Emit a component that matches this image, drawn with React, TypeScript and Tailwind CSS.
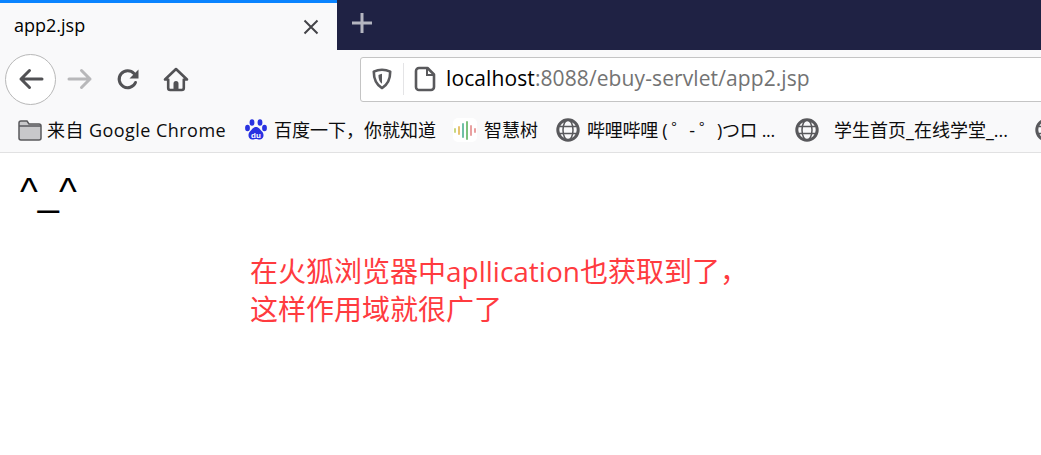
import React from "react";

const F = { fontFamily: '"Open Sans","Noto Sans CJK SC",sans-serif' };

function Globe({ className = "" }: { className?: string }) {
  return (
    <svg width="24" height="24" viewBox="0 0 24 24" fill="none" stroke="#59595c" className={className}>
      <circle cx="12" cy="12" r="10.2" strokeWidth="3" />
      <ellipse cx="12" cy="12" rx="5" ry="10" strokeWidth="1.5" />
      <path d="M3 8.5h18M3 15.5h18" strokeWidth="1.5" />
    </svg>
  );
}

function Shield() {
  return (
    <svg width="20" height="22" viewBox="1.500 1 17 18" fill="none" className="shrink-0">
      <path d="M10 2.200c2.400 0 5 .6 7 1.500 0 6.500-1.600 11-7 14-5.400-3-7-7.500-7-14 2-.9 4.600-1.500 7-1.500z" stroke="#5b5b5e" strokeWidth="2.200" strokeLinejoin="round" />
      <path d="M10 5.500v8.500c-2.300-1.700-3-4-3-7.500 1-.5 2-.8 3-1z" fill="#5b5b5e" />
    </svg>
  );
}

export default function App() {
  return (
    <div className="w-[1041px] h-[455px] bg-white overflow-hidden flex flex-col" style={F}>
      <div className="h-[50px] flex bg-[#1f2244] shrink-0">
        <div className="w-[337px] bg-[#f9f9fa] border-t-[3px] border-[#0a84ff] flex items-center pl-[14px] pr-[18px] justify-between">
          <span className="text-[18px] text-black leading-none mb-[4px]">app2.jsp</span>
          <svg width="16" height="16" viewBox="0 0 16 16" stroke="#444448" strokeWidth="2">
            <path d="M1.500 1.500l13 13M14.500 1.500l-13 13" />
          </svg>
        </div>
        <div className="flex items-center pl-[14px] pb-[4px]">
          <svg width="22" height="22" viewBox="0 0 22 22" stroke="#b4b5c0" strokeWidth="3">
            <path d="M11 1v20M1 11h20" />
          </svg>
        </div>
      </div>

      <div className="h-[55px] bg-[#f9f9fa] flex items-center shrink-0 pl-[5px] pt-[3px]">
        <div className="w-[51px] h-[51px] rounded-full border border-[#b8b8b8] bg-white flex items-center justify-center shrink-0">
          <svg width="26" height="24" viewBox="0 0 26 24" fill="none" stroke="#515154" strokeWidth="3" strokeLinecap="round" strokeLinejoin="round">
            <path d="M24 12H3M11.500 3.500L3 12l8.500 8.500" />
          </svg>
        </div>
        <svg width="26" height="24" viewBox="0 0 26 24" fill="none" stroke="#b8b8ba" strokeWidth="3" strokeLinecap="round" strokeLinejoin="round" className="ml-[11px] shrink-0">
          <path d="M2 12h21M14.500 3.500L23 12l-8.500 8.500" />
        </svg>
        <svg width="24" height="24" viewBox="0 0 24 24" fill="none" stroke="#525255" strokeWidth="3" className="ml-[23px] shrink-0">
          <path d="M19.500 15.500A8.500 8.500 0 1 1 18 6.500" strokeLinecap="round" />
          <path d="M22.500 2.500v9h-9z" fill="#525255" stroke="none" />
        </svg>
        <svg width="26" height="26" viewBox="0 0 26 26" fill="none" className="ml-[23px] shrink-0">
          <path d="M13 3L2 13.500h3.200V22a2 2 0 0 0 2 2h11.600a2 2 0 0 0 2-2v-8.500H24z" stroke="#525255" strokeWidth="2.600" strokeLinejoin="round" />
          <path d="M10.500 23v-5.500a2.500 2.500 0 0 1 5 0V23z" fill="#525255" />
        </svg>
        <div className="ml-[171px] w-[700px] h-[45px] bg-white border border-[#c4c4c4] rounded-[3px] flex items-center shrink-0 pl-[11px]">
          <Shield />
          <div className="w-px h-[32px] bg-[#e4e4e6] ml-[11px]" />
          <svg width="22" height="26" viewBox="0 0 22 26" fill="none" className="ml-[10px] shrink-0">
            <path d="M5 2h8.500L20 8.500V21a3 3 0 0 1-3 3H5a3 3 0 0 1-3-3V5a3 3 0 0 1 3-3z" stroke="#59595c" strokeWidth="2.600" strokeLinejoin="round" />
            <path d="M13 2.500V9h6.500" stroke="#59595c" strokeWidth="2" />
          </svg>
          <span className="ml-[10px] text-[21px] tracking-[0.1px] whitespace-nowrap text-[#737373]">
            <span className="text-black">localhost</span>:8088/ebuy-servlet/app2.jsp
          </span>
        </div>
      </div>

      <div className="h-[48px] bg-[#f9f9fa] border-b border-[#e1e1e2] flex items-center shrink-0 text-[18px] text-[#0c0c0d] whitespace-nowrap overflow-hidden pl-[18px] pt-[3px]">
        <svg width="24" height="24" viewBox="0 0 24 24" className="shrink-0">
          <path d="M1 5a2 2 0 0 1 2-2h6l2 3h10a2 2 0 0 1 2 2v12a2 2 0 0 1-2 2H3a2 2 0 0 1-2-2z" fill="#c8c8ca" stroke="#59595c" strokeWidth="1.500" />
          <path d="M1 8h22" stroke="#59595c" strokeWidth="1.500" />
        </svg>
        <span className="ml-[5px] tracking-[0.45px]">来自 Google Chrome</span>
        <svg width="24" height="24" viewBox="0 0 24 24" className="ml-[18px] shrink-0">
          <g fill="#2932e1">
            <ellipse cx="8" cy="4.500" rx="2.400" ry="3.300" />
            <ellipse cx="16" cy="4.500" rx="2.400" ry="3.300" />
            <ellipse cx="3.500" cy="10" rx="2.400" ry="3.200" />
            <ellipse cx="20.500" cy="10" rx="2.400" ry="3.200" />
            <path d="M12 9c3 0 4 2.500 6 4.500 2.500 2.500 2 7.500-2 8-1.500.2-2.500-.5-4-.5s-2.500.7-4 .5c-4-.5-4.500-5.500-2-8C8 11.500 9 9 12 9z" />
          </g>
          <text x="12" y="20" textAnchor="middle" fontSize="8" fontWeight="700" fill="#fff" fontFamily="Liberation Sans">du</text>
        </svg>
        <span className="ml-[6px]">百度一下，你就知道</span>
        <svg width="24" height="24" viewBox="0 0 24 24" className="ml-[17px] shrink-0 bg-white rounded-[5px]">
          <g strokeWidth="2" strokeLinecap="round">
            <path d="M2 11v3" stroke="#c9d77e" />
            <path d="M6 9v7" stroke="#e8c26f" />
            <path d="M10 6v13" stroke="#6fc0a5" />
            <path d="M14 4v17" stroke="#7cc27d" />
            <path d="M18 8v9" stroke="#e9a0a0" />
            <path d="M22 11v3" stroke="#e9a0a0" />
          </g>
        </svg>
        <span className="ml-[7px]">智慧树</span>
        <Globe className="ml-[18px] shrink-0" />
        <span className="ml-[7px] w-[191px] shrink-0 tracking-[-0.3px]">哔哩哔哩 ( ゜- ゜)つロ ...</span>
        <Globe className="ml-[17px] shrink-0" />
        <span className="ml-[15px]">学生首页_在线学堂_...</span>
        <Globe className="ml-[27px] shrink-0" />
      </div>

      <div className="flex-1 bg-white">
        <p className="ml-[20px] mt-[15px] text-[38px] leading-[48px] text-black" style={{ fontFamily: '"Liberation Sans",sans-serif' }}>^_^</p>
        <p className="ml-[250px] mt-[36px] text-[28px] leading-[38px] text-[#ff3b3f]">
          在火狐浏览器中apllication也获取到了，
          <br />
          这样作用域就很广了
        </p>
      </div>
    </div>
  );
}
